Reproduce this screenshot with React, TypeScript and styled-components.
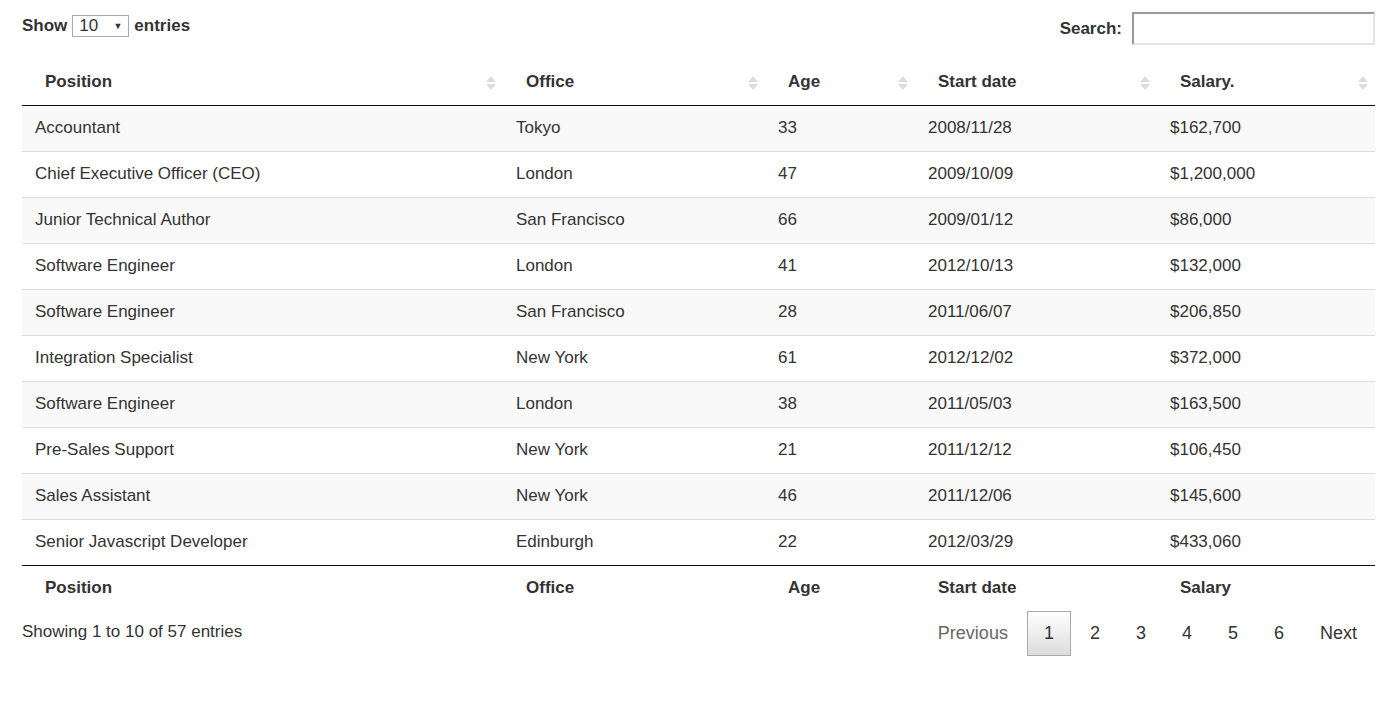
import React from "react";
import styled, { createGlobalStyle } from "styled-components";

const Global = createGlobalStyle`
  body { margin: 0; background: #fff; font-family: "Liberation Sans", Arial, sans-serif; color: #333; }
`;

const Wrap = styled.div`
  padding: 12px 6px 0 22px;
  font-size: 17px;
`;
const TopBar = styled.div`
  display: flex; justify-content: space-between; align-items: flex-start; height: 48px;
`;
const Length = styled.label`
  display: flex; align-items: center; gap: 5px; font-weight: bold; font-size: 17px; margin-top: 3px;
`;
const Select = styled.div`
  width: 57px; height: 22px; border: 1px solid #aaa; display: flex; align-items: center;
  justify-content: space-between; padding: 0 6px; box-sizing: border-box; font-weight: normal;
  span { font-size: 9px; }
`;
const SearchLbl = styled.label`
  display: flex; align-items: center; gap: 10px; font-weight: bold; font-size: 17px;
`;
const Input = styled.div`
  width: 243px; height: 33px; box-sizing: border-box;
  border: 2px solid #e5e5e5; border-top-color: #999; border-left-color: #999;
`;
const Table = styled.table`
  width: 1353px; border-collapse: collapse; table-layout: fixed;
`;
const Th = styled.th`
  position: relative; text-align: left; font-weight: bold; height: 45px; padding: 0 0 0 23px;
  box-sizing: border-box; vertical-align: middle;
`;
const HeadRow = styled.tr` border-bottom: 1px solid #111; `;
const FootRow = styled.tr` border-top: 1px solid #111; `;
const Sort = styled.span`
  position: absolute; right: 7px; top: 16px; display: flex; flex-direction: column; gap: 2px;
  i { width: 0; height: 0; border-left: 5px solid transparent; border-right: 5px solid transparent; }
  i:first-child { border-bottom: 6px solid #ddd; }
  i:last-child { border-top: 6px solid #ddd; }
`;
const Tr = styled.tr<{ $odd: boolean }>`
  background: ${p => (p.$odd ? "#f9f9f9" : "#fff")};
  border-top: 1px solid #ddd;
  &:first-child { border-top: none; }
`;
const Td = styled.td`
  height: 45px; padding: 0 0 0 13px; font-size: 17px;
`;
const Bottom = styled.div`
  display: flex; justify-content: space-between; align-items: center; margin-top: 1px;
`;
const Info = styled.div` font-size: 17px; margin-top: -4px; `;
const Pager = styled.div` display: flex; align-items: center; `;
const PBtn = styled.div<{ $cur?: boolean; $dim?: boolean }>`
  height: 45px; box-sizing: border-box; display: flex; align-items: center; padding: 0 16px;
  font-size: 18px; color: ${p => (p.$dim ? "#666" : "#333")};
  border: 1px solid ${p => (p.$cur ? "#aaa" : "transparent")};
  background: ${p => (p.$cur ? "linear-gradient(#fff, #dcdcdc)" : "none")};
  margin: 0 1px;
`;

const cols = [
  ["Position", 481], ["Office", 262], ["Age", 150], ["Start date", 242], ["Salary.", 218],
] as const;
const rows = [
  ["Accountant", "Tokyo", "33", "2008/11/28", "$162,700"],
  ["Chief Executive Officer (CEO)", "London", "47", "2009/10/09", "$1,200,000"],
  ["Junior Technical Author", "San Francisco", "66", "2009/01/12", "$86,000"],
  ["Software Engineer", "London", "41", "2012/10/13", "$132,000"],
  ["Software Engineer", "San Francisco", "28", "2011/06/07", "$206,850"],
  ["Integration Specialist", "New York", "61", "2012/12/02", "$372,000"],
  ["Software Engineer", "London", "38", "2011/05/03", "$163,500"],
  ["Pre-Sales Support", "New York", "21", "2011/12/12", "$106,450"],
  ["Sales Assistant", "New York", "46", "2011/12/06", "$145,600"],
  ["Senior Javascript Developer", "Edinburgh", "22", "2012/03/29", "$433,060"],
];

export default function App() {
  return (
    <Wrap>
      <Global />
      <TopBar>
        <Length>Show <Select>10 <span>▼</span></Select> entries</Length>
        <SearchLbl>Search: <Input /></SearchLbl>
      </TopBar>
      <Table>
        <colgroup>{cols.map(([n, w]) => <col key={n} style={{ width: w }} />)}</colgroup>
        <thead>
          <HeadRow>
            {cols.map(([n]) => (
              <Th key={n}>{n}<Sort><i /><i /></Sort></Th>
            ))}
          </HeadRow>
        </thead>
        <tbody>
          {rows.map((r, i) => (
            <Tr key={i} $odd={i % 2 === 0}>
              {r.map((c, j) => <Td key={j}>{c}</Td>)}
            </Tr>
          ))}
        </tbody>
        <tfoot>
          <FootRow>
            {["Position", "Office", "Age", "Start date", "Salary"].map(n => <Th key={n}>{n}</Th>)}
          </FootRow>
        </tfoot>
      </Table>
      <Bottom>
        <Info>Showing 1 to 10 of 57 entries</Info>
        <Pager>
          <PBtn $dim>Previous</PBtn>
          <PBtn $cur>1</PBtn>
          {["2", "3", "4", "5", "6"].map(n => <PBtn key={n}>{n}</PBtn>)}
          <PBtn>Next</PBtn>
        </Pager>
      </Bottom>
    </Wrap>
  );
}
